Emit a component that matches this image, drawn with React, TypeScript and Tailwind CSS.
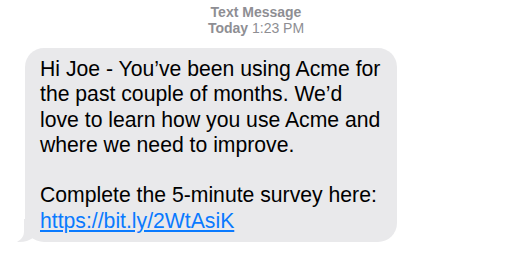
export default function App() {
  return (
    <div className="w-[512px] h-[254px] bg-white overflow-hidden" style={{ fontFamily: '"Liberation Sans", Arial, sans-serif' }}>
      <div className="pt-[4px] flex flex-col items-center text-[14px] leading-[16px] text-[#8e8e93]">
        <div className="font-bold">Text Message</div>
        <div><span className="font-bold">Today</span> 1:23 PM</div>
      </div>
      <div className="relative ml-[25px] mt-[12px] w-[372px] h-[194px]">
        <svg className="absolute left-[-9px] bottom-[-1px]" width="34" height="24" viewBox="0 0 34 24">
          <path d="M8 0 L8 12 C8 17 6 20 1 23 C8 23.5 13 21.5 17 19 C20 20.5 24 21.5 30 21.5 L34 0 Z" fill="#e9e9eb" />
        </svg>
        <div className="relative h-full rounded-[19px] bg-[#e9e9eb] pl-[15px] pr-[6px] pt-[8px] text-[21.2px] leading-[25.3px] text-black whitespace-nowrap">
          <div>Hi Joe - You’ve been using Acme for</div>
          <div>the past couple of months. We’d</div>
          <div>love to learn how you use Acme and</div>
          <div>where we need to improve.</div>
          <div>&nbsp;</div>
          <div>Complete the 5-minute survey here:</div>
          <div><a className="text-[#0a7aff] underline" href="#">https://bit.ly/2WtAsiK</a></div>
        </div>
      </div>
    </div>
  );
}
